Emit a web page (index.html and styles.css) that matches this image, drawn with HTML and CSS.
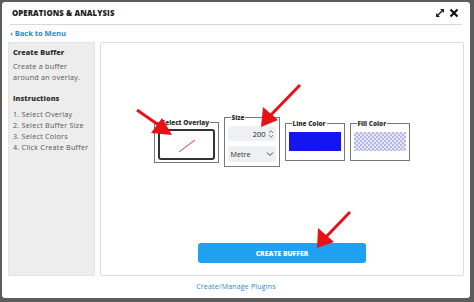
FILE: index.html
```html
<!DOCTYPE html>
<html lang="en">
<head>
  <meta charset="UTF-8" />
  <title>Operations &amp; Analysis</title>
  <link rel="stylesheet" href="styles.css">
</head>
<body>

<div class="dialog">
  <header class="dlg-head">
    <span class="dlg-title">OPERATIONS &amp; ANALYSIS</span>
    <span class="dlg-tools">
      <svg width="10" height="10" viewBox="0 0 10 10"><path d="M1.5 8.5 L8.5 1.5" stroke="#222" stroke-width="1.4"/><path d="M5 1 H9 V5 Z M1 5 V9 H5 Z" fill="#222"/></svg>
      <svg width="10" height="10" viewBox="0 0 10 10"><path d="M1.5 1.5 L8.5 8.5 M8.5 1.5 L1.5 8.5" stroke="#111" stroke-width="2.2"/></svg>
    </span>
  </header>
  <a class="back" href="#">&lsaquo; Back to Menu</a>

  <div class="content">
    <aside class="side">
      <h3>Create Buffer</h3>
      <p>Create a buffer around an overlay.</p>
      <h3 class="instr">Instructions</h3>
      <ol>
        <li>1. Select Overlay</li>
        <li>2. Select Buffer Size</li>
        <li>3. Select Colors</li>
        <li>4. Click Create Buffer</li>
      </ol>
    </aside>

    <main class="panel">
      <div class="fields">
        <fieldset class="box">
          <legend>Select Overlay</legend>
          <div class="overlay-pick">
            <svg width="52" height="26" viewBox="0 0 52 26"><path d="M19 21 L35 9" stroke="#e8333c" stroke-width="1"/></svg>
          </div>
        </fieldset>
        <fieldset class="box size">
          <legend>Size</legend>
          <div class="num">200<span class="spin">
            <svg width="6" height="10" viewBox="0 0 6 10"><path d="M1 4 L3 1.5 L5 4 M1 6 L3 8.5 L5 6" fill="none" stroke="#666" stroke-width="0.8"/></svg>
          </span></div>
          <div class="sel">Metre
            <svg width="8" height="6" viewBox="0 0 8 6"><path d="M1 1.5 L4 4.5 L7 1.5" fill="none" stroke="#444" stroke-width="1"/></svg>
          </div>
        </fieldset>
        <fieldset class="box">
          <legend>Line Color</legend>
          <div class="swatch line"></div>
        </fieldset>
        <fieldset class="box">
          <legend>Fill Color</legend>
          <div class="swatch fill"></div>
        </fieldset>
      </div>
      <button class="create">CREATE BUFFER</button>
    </main>
  </div>

  <a class="plugins" href="#">Create/Manage Plugins</a>

  <svg class="arrows" width="474" height="302" viewBox="0 0 474 302">
    <g stroke="#e8111a" stroke-width="3" fill="#e8111a">
      <path d="M137 110 L160 126"/>
      <path d="M172 135 L151 133 L162 118 Z" stroke="none"/>
      <path d="M300 85 L269 117"/>
      <path d="M261 127 L263 107 L278 120 Z" stroke="none"/>
      <path d="M350 212 L325 238"/>
      <path d="M317 248 L318 228 L334 242 Z" stroke="none"/>
    </g>
  </svg>
</div>

</body>
</html>
```

FILE: styles.css
```css
body { margin: 0; padding: 2px 4px 4px 2px; background: #5c5c5c; font-family: 'Open Sans', 'Liberation Sans', sans-serif; }
.dialog { position: relative; background: #fff; height: 296px; border-radius: 3px; padding: 0 6px; box-sizing: border-box; display: flex; flex-direction: column; }
.dlg-head { display: flex; justify-content: space-between; align-items: center; height: 22px; margin: 0 2px; padding: 0 3px 0 2px; border-bottom: 1px solid #d8d8d8; }
.dlg-title { font-size: 7.8px; font-weight: 800; color: #222; letter-spacing: 0.1px; }
.dlg-tools { display: flex; gap: 4px; align-items: center; }
.back { color: #1a8ad8; font-size: 7.5px; font-weight: 700; text-decoration: none; margin: 3px 0 0 2px; height: 14px; line-height: 10px; }
.content { display: flex; gap: 5px; height: 234px; }
.side { width: 87px; background: #ededed; border: 1px solid #e2e2e2; box-sizing: border-box; padding: 4px 4px; color: #555; }
.side h3 { font-size: 7.2px; font-weight: 800; color: #333; margin: 0 0 4px; letter-spacing: 0.1px; }
.side p { font-size: 7.2px; line-height: 10.5px; margin: 0; letter-spacing: 0.25px; }
.side .instr { margin-top: 11px; margin-bottom: 6px; }
.side ol { list-style: none; padding: 0; margin: 0; font-size: 7.2px; line-height: 11px; letter-spacing: 0.25px; }
.panel { flex: 1; border: 1px solid #dcdcdc; border-radius: 2px; display: flex; flex-direction: column; align-items: center; padding-top: 71px; }
.fields { display: flex; gap: 5px; align-items: center; margin-left: -1px; }
.box { border: 1px solid #777; margin: 0; padding: 3px 3px 2px; min-width: 0; }
.box legend { font-size: 6.4px; font-weight: 800; color: #333; padding: 0 1px; margin-left: 3px; line-height: 7px; }
.overlay-pick { width: 53px; height: 27px; border: 2px solid #333; border-radius: 3px; }
.overlay-pick svg { display: block; }
.size { padding: 3px 3px 4px; }
.num { width: 48px; height: 15px; background: #eef0f3; border-radius: 3px; font-size: 7.5px; color: #222; display: flex; align-items: center; justify-content: flex-end; padding-right: 2px; box-sizing: border-box; margin-top: 2px; gap: 2px; }
.spin svg { display: block; }
.sel { width: 48px; height: 16px; margin-top: 5px; background: #eef0f3; border-radius: 3px; font-size: 7.2px; color: #333; display: flex; align-items: center; justify-content: space-between; padding: 0 2px 0 3px; box-sizing: border-box; }
.swatch { width: 52px; height: 19px; margin: 2px 0 7px; }
.line { background: #1515f0; }
.fill { background-color: #e6e6f4; background-image: linear-gradient(45deg, #b8b8e6 25%, transparent 25%, transparent 75%, #b8b8e6 75%), linear-gradient(45deg, #b8b8e6 25%, transparent 25%, transparent 75%, #b8b8e6 75%); background-size: 4px 4px; background-position: 0 0, 2px 2px; }
.create { margin-top: 76px; width: 168px; height: 20px; border: none; border-radius: 3px; background: #1ea0f3; color: #fff; font-family: inherit; font-size: 6.8px; font-weight: 800; }
.plugins { align-self: center; color: #2a86d0; font-size: 7px; text-decoration: none; margin-top: 6px; letter-spacing: 0.2px; }
.arrows { position: absolute; left: -2px; top: -2px; pointer-events: none; }
```
